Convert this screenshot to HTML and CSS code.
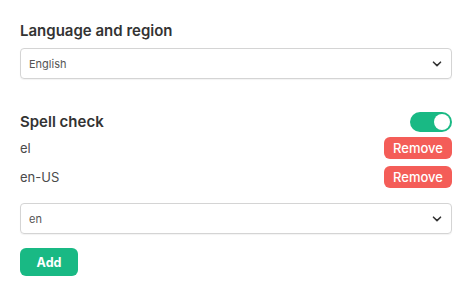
FILE: index.html
```html
<!DOCTYPE html>
<html>
<head>
<meta charset="utf-8">
<link rel="stylesheet" href="styles.css">
</head>
<body>
<div class="panel">
  <section class="section">
    <h2 class="heading">Language and region</h2>
    <div class="select">
      <span class="select-value">English</span>
      <svg class="chevron" width="10" height="6" viewBox="0 0 10 6"><polyline points="1.5,1.2 5,4.6 8.5,1.2" fill="none" stroke="#333" stroke-width="1.6" stroke-linecap="round" stroke-linejoin="round"/></svg>
    </div>
  </section>

  <section class="section spell">
    <div class="row head-row">
      <h2 class="heading">Spell check</h2>
      <div class="toggle"><span class="knob"></span></div>
    </div>
    <div class="row lang-row">
      <span class="lang">el</span>
      <button class="btn-remove">Remove</button>
    </div>
    <div class="row lang-row">
      <span class="lang">en-US</span>
      <button class="btn-remove">Remove</button>
    </div>
    <div class="select select-add">
      <span class="select-value">en</span>
      <svg class="chevron" width="10" height="6" viewBox="0 0 10 6"><polyline points="1.5,1.2 5,4.6 8.5,1.2" fill="none" stroke="#333" stroke-width="1.6" stroke-linecap="round" stroke-linejoin="round"/></svg>
    </div>
    <button class="btn-add">Add</button>
  </section>
</div>
</body>
</html>
```

FILE: styles.css
```css
* { box-sizing: border-box; }
html, body { margin: 0; padding: 0; background: #fff; }
body {
  font-family: Inter, "Noto Sans", sans-serif;
  color: #333;
}
.panel {
  width: 452px;
  padding: 21px 0 0 20px;
}
.section { display: flex; flex-direction: column; }
.heading {
  margin: 0;
  font-size: 15px;
  line-height: 20px;
  font-weight: 600;
  color: #333;
}
.select {
  margin-top: 7px;
  height: 31px;
  border: 1px solid #d4d4d4;
  border-radius: 4px;
  box-shadow: 0 1px 1px rgba(0,0,0,0.05);
  display: flex;
  align-items: center;
  justify-content: space-between;
  padding: 0 8px 0 8px;
}
.select-value { font-size: 11px; color: #555; }
.chevron { margin-right: 1px; }
.spell { margin-top: 33px; }
.row {
  display: flex;
  align-items: center;
  justify-content: space-between;
}
.head-row { height: 20px; }
.toggle {
  width: 42px;
  height: 20px;
  border-radius: 10px;
  background: #19b984;
  position: relative;
}
.knob {
  position: absolute;
  right: 2px;
  top: 2px;
  width: 16px;
  height: 16px;
  border-radius: 50%;
  background: #fff;
}
.lang-row { height: 22px; margin-top: 5px; }
.lang-row + .lang-row { margin-top: 7px; }
.lang { font-size: 13px; color: #4a4a4a; }
.btn-remove {
  width: 68px;
  height: 22px;
  border: none;
  border-radius: 6px;
  background: #f45d58;
  color: #fff;
  font-family: Inter, "Noto Sans", sans-serif;
  font-size: 13px;
  font-weight: 500;
  padding: 0;
}
.select-add { margin-top: 15px; }
.btn-add {
  margin-top: 14px;
  width: 58px;
  height: 28px;
  border: none;
  border-radius: 6px;
  background: #19b984;
  color: #fff;
  font-family: Inter, "Noto Sans", sans-serif;
  font-size: 12.5px;
  font-weight: 700;
  padding: 0;
}
```
